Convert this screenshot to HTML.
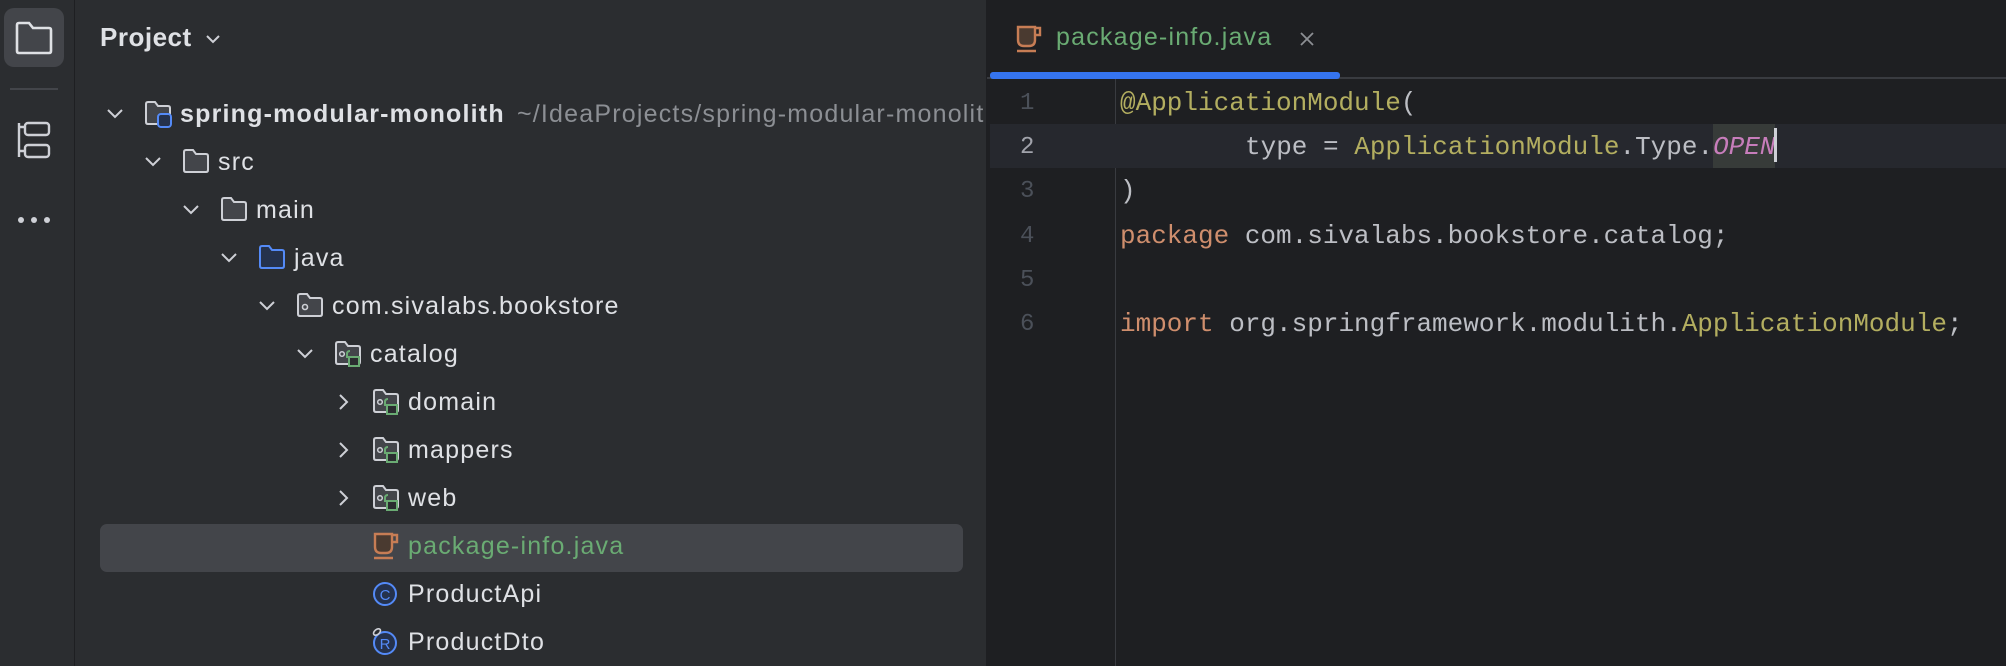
<!DOCTYPE html>
<html><head><meta charset="utf-8"><style>
*{margin:0;padding:0;box-sizing:border-box}
body{width:2006px;height:666px;background:#1e1f22;position:relative;overflow:hidden;font-family:"Liberation Sans",sans-serif}
.tb{position:absolute;left:0;top:0;width:75px;height:666px;background:#2b2d30;border-right:1px solid #1e1f22}
.proj{position:absolute;left:75px;top:0;width:911px;height:666px;background:#2b2d30;overflow:hidden}
.row{position:absolute;left:0;height:48px;width:911px}
.row .t{position:absolute;top:10px;font-size:25px;letter-spacing:1.2px;color:#dfe1e5;white-space:nowrap}
.row svg{position:absolute}
.ed{position:absolute;left:987px;top:0;right:0;height:666px;background:#1e1f22}
.code{position:absolute;font-family:"Liberation Mono",monospace;font-size:26px;color:#bcbec4;white-space:pre}
.ln{position:absolute;font-family:"Liberation Mono",monospace;font-size:24px;color:#4b5059;width:30px;text-align:left}
</style></head><body>
<div class="tb">
 <div style="position:absolute;left:4px;top:8px;width:60px;height:59px;background:#43454a;border-radius:10px"></div>
 <svg style="position:absolute;left:14px;top:20px" width="40" height="36" viewBox="0 0 40 36"><path d="M3 5 Q3 3 5 3 H15 L19 8 H35 Q37 8 37 10 V31 Q37 33 35 33 H5 Q3 33 3 31 Z" fill="none" stroke="#dfe1e5" stroke-width="2.6"/></svg>
 <div style="position:absolute;left:10px;top:88px;width:48px;height:2px;background:#43454a"></div>
 <svg style="position:absolute;left:16px;top:120px" width="36" height="40" viewBox="0 0 36 40"><path d="M3 3 V37 M3 7 H9 M3 31 H9" stroke="#ced0d6" stroke-width="2.4" fill="none"/><rect x="9" y="3" width="24" height="12" rx="3" fill="none" stroke="#ced0d6" stroke-width="2.4"/><rect x="9" y="25" width="24" height="12" rx="3" fill="none" stroke="#ced0d6" stroke-width="2.4"/></svg>
 <svg style="position:absolute;left:16px;top:214px" width="40" height="12"><circle cx="5" cy="6" r="3" fill="#ced0d6"/><circle cx="18" cy="6" r="3" fill="#ced0d6"/><circle cx="31" cy="6" r="3" fill="#ced0d6"/></svg>
</div>
<div class="proj">
 <div style="position:absolute;left:25px;top:22px;font-size:26px;font-weight:bold;color:#dfe1e5;letter-spacing:0.5px">Project</div>
 <svg style="position:absolute;left:130px;top:33px" width="16" height="12"><path d="M2 3 L8 9 L14 3" stroke="#ced0d6" stroke-width="2" fill="none"/></svg>
 <div style="position:absolute;left:25px;top:524px;width:863px;height:48px;background:#43454a;border-radius:7px"></div>
 <div id="tree"></div>
</div>
<div class="ed">
 <svg style="position:absolute;left:28px;top:25px" width="28" height="28" viewBox="0 0 28 28"><path d="M3 2 H20 V15 Q20 21 14 21 H9 Q3 21 3 15 Z" fill="#4a3a30" stroke="#c77d55" stroke-width="2.4"/><path d="M20 3 H25 V10 H20" fill="none" stroke="#c77d55" stroke-width="2.4"/><path d="M2 26 H21" stroke="#c77d55" stroke-width="2.4"/></svg>
 <div style="position:absolute;left:69px;top:23px;font-size:25px;letter-spacing:1.2px;color:#6aab73">package-info.java</div>
 <svg style="position:absolute;left:312px;top:31px" width="16" height="16"><path d="M2 2 L14 14 M14 2 L2 14" stroke="#8c8f94" stroke-width="1.8"/></svg>
 <div style="position:absolute;left:0;top:77px;right:0;height:2px;background:#393b40"></div>
 <div style="position:absolute;left:3px;top:72px;width:350px;height:7px;background:#3574f0;border-radius:3px"></div>
 <div style="position:absolute;left:128px;top:79px;width:1px;height:587px;background:#393b40"></div>
 <div style="position:absolute;left:3px;top:124px;right:0;height:44px;background:#26282e"></div>
 <div style="position:absolute;left:726px;top:124px;width:62px;height:44px;background:#373b39"></div>
 <div class="ln" style="left:33px;top:90px">1</div>
 <div class="ln" style="left:33px;top:134px;color:#a1a3ab">2</div>
 <div class="ln" style="left:33px;top:178px">3</div>
 <div class="ln" style="left:33px;top:223px">4</div>
 <div class="ln" style="left:33px;top:267px">5</div>
 <div class="ln" style="left:33px;top:311px">6</div>
 <div class="code" style="left:133px;top:88px"><span style="color:#b3ae60">@ApplicationModule</span>(</div>
 <div class="code" style="left:258px;top:132px">type = <span style="color:#b3ae60">ApplicationModule</span>.Type.<span style="color:#c77dbb;font-style:italic">OPEN</span></div>
 <div style="position:absolute;left:787px;top:128px;width:3px;height:34px;background:#ced0d6"></div>
 <div class="code" style="left:133px;top:176px">)</div>
 <div class="code" style="left:133px;top:221px"><span style="color:#cf8e6d">package</span> com.sivalabs.bookstore.catalog;</div>
 <div class="code" style="left:133px;top:309px"><span style="color:#cf8e6d">import</span> org.springframework.modulith.<span style="color:#b3ae60">ApplicationModule</span>;</div>
</div>
<script>
var rows=[
[0,'v','proj','<b>spring-modular-monolith</b> <span style="color:#8c8f94;margin-left:4px">~/IdeaProjects/spring-modular-monolith</span>'],
[1,'v','f','src'],[2,'v','f','main'],[3,'v','jf','java'],[4,'v','pk','com.sivalabs.bookstore'],
[5,'v','mod','catalog'],[6,'>','mod','domain'],[6,'>','mod','mappers'],[6,'>','mod','web'],
[6,'','cup','<span style="color:#6aab73">package-info.java</span>'],[6,'','C','ProductApi'],[6,'','R','ProductDto']];
var folder='<path d="M2 4 Q2 2 4 2 H11 L14 6 H24 Q26 6 26 8 V22 Q26 24 24 24 H4 Q2 24 2 22 Z" fill="#43454a" stroke="#ced0d6" stroke-width="2"/>';
var icons={
f:folder,
jf:'<path d="M2 4 Q2 2 4 2 H11 L14 6 H24 Q26 6 26 8 V22 Q26 24 24 24 H4 Q2 24 2 22 Z" fill="#25324d" stroke="#548af7" stroke-width="2"/>',
proj:folder+'<rect x="14" y="14" width="13" height="13" rx="3" fill="#25324d" stroke="#548af7" stroke-width="2"/>',
pk:folder+'<circle cx="9" cy="15" r="2.5" fill="none" stroke="#ced0d6" stroke-width="1.6"/>',
mod:folder+'<circle cx="8" cy="14" r="2.3" fill="none" stroke="#ced0d6" stroke-width="1.5"/><path d="M13 18 V14 Q13 11 16 11" fill="none" stroke="#6aab73" stroke-width="2"/><rect x="15" y="17" width="10" height="9" fill="#2b2d30" stroke="#6aab73" stroke-width="2"/>',
cup:'<path d="M3 2 H20 V15 Q20 21 14 21 H9 Q3 21 3 15 Z" fill="#4a3a30" stroke="#c77d55" stroke-width="2.4"/><path d="M20 3 H25 V10 H20" fill="none" stroke="#c77d55" stroke-width="2.4"/><path d="M2 26 H21" stroke="#c77d55" stroke-width="2.4"/>',
C:'<circle cx="13" cy="14" r="11" fill="#25324d" stroke="#548af7" stroke-width="2"/><text x="13" y="20" font-size="15" text-anchor="middle" fill="#548af7" font-family="Liberation Sans">C</text>',
R:'<circle cx="13" cy="15" r="11" fill="#25324d" stroke="#548af7" stroke-width="2"/><text x="13" y="21" font-size="15" text-anchor="middle" fill="#548af7" font-family="Liberation Sans">R</text><ellipse cx="5" cy="4" rx="4" ry="2.5" transform="rotate(-40 5 4)" fill="#2b2d30" stroke="#ced0d6" stroke-width="1.6"/>'
};
var h='';
rows.forEach(function(r,i){
 var cx=40+38*r[0], top=90+48*i;
 h+='<div class="row" style="top:'+top+'px">';
 if(r[1]=='v')h+='<svg style="left:'+(cx-9)+'px;top:17px" width="18" height="14"><path d="M2 3 L9 10 L16 3" stroke="#ced0d6" stroke-width="2" fill="none"/></svg>';
 if(r[1]=='>')h+='<svg style="left:'+(cx-6)+'px;top:15px" width="14" height="18"><path d="M3 2 L10 9 L3 16" stroke="#ced0d6" stroke-width="2" fill="none"/></svg>';
 h+='<svg style="left:'+(cx+29)+'px;top:10px" width="28" height="28" viewBox="0 0 28 28">'+icons[r[2]]+'</svg>';
 h+='<div class="t" style="left:'+(cx+65)+'px">'+r[3]+'</div></div>';
});
document.getElementById('tree').innerHTML=h;
</script>
</body></html>
